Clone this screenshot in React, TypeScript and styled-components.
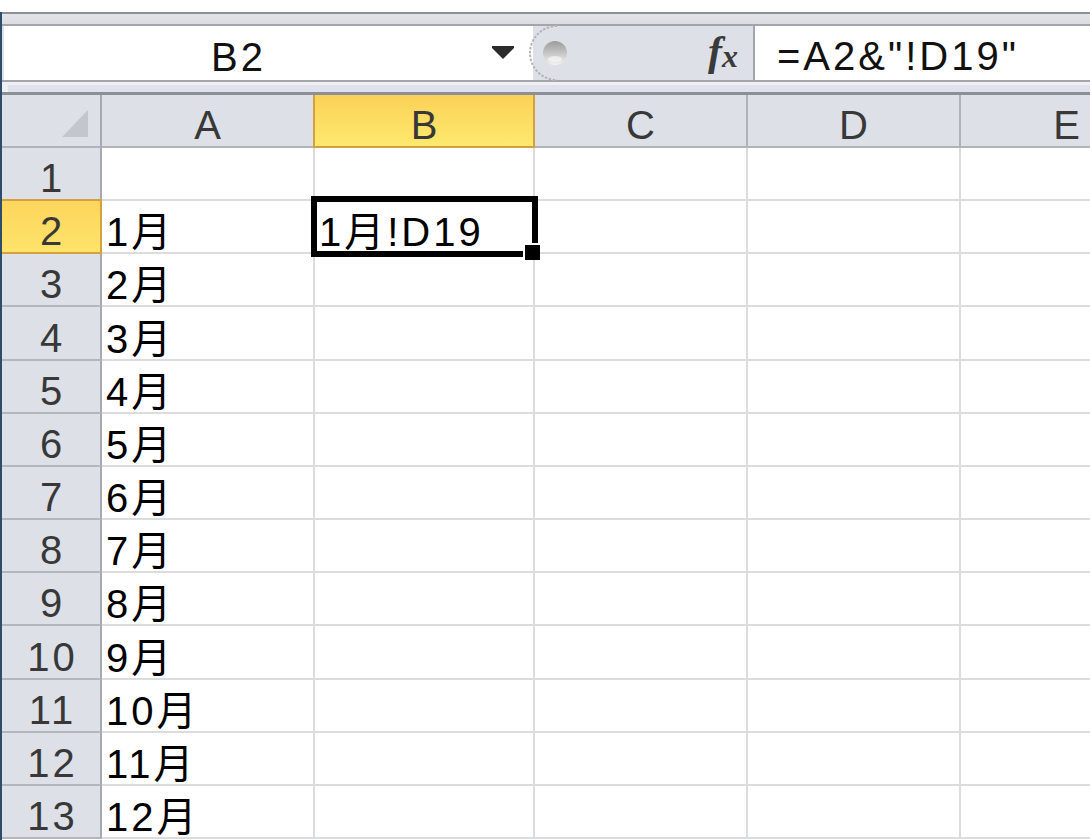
import React from "react";
import styled, { createGlobalStyle } from "styled-components";

const GlobalStyle = createGlobalStyle`
  html, body { margin: 0; padding: 0; background: #ffffff; }
  body {
    width: 1090px;
    height: 840px;
    overflow: hidden;
    font-family: "Liberation Sans", "Noto Sans CJK JP", sans-serif;
  }
`;

const COLS = "100px 213px 220px 213px 213px 213px";
const ORANGE = "#d5a03e";

const Page = styled.div`
  width: 1090px;
  height: 840px;
  padding-top: 12px;
  box-sizing: border-box;
  background: #ffffff;
  overflow: hidden;
`;

const Window = styled.div`
  height: 828px;
  border-left: 2px solid #2e4d6c;
  display: flex;
  flex-direction: column;
  overflow: hidden;
`;

const FormulaBar = styled.div`
  flex: none;
  display: flex;
  flex-direction: column;
  border-top: 2px solid #8c9197;
`;

const TopBand = styled.div`
  height: 10px;
  background: linear-gradient(#e3e5ea, #d9dce2);
  border-bottom: 2px solid #a2a6ac;
`;

const BarRow = styled.div`
  height: 54px;
  display: flex;
  padding-left: 2px;
  background: #dde0e6;
  border-bottom: 2px solid #a2a6ac;
`;

const NameBox = styled.div`
  width: 529px;
  flex: none;
  display: flex;
  background: #ffffff;
`;

const NameText = styled.div`
  flex: 1;
  display: flex;
  align-items: flex-end;
  justify-content: center;
  padding-bottom: 3px;
  font-size: 40px;
  line-height: 40px;
  letter-spacing: 3px;
  color: #111;
`;

const DropButton = styled.div`
  width: 60px;
  display: flex;
  align-items: center;
  justify-content: center;
  padding-bottom: 2px;
`;

const Splitter = styled.svg`
  flex: none;
  overflow: visible;
`;

const FxArea = styled.div`
  flex: none;
  width: 178px;
  display: flex;
  align-items: center;
  justify-content: flex-end;
  padding-right: 15px;
  box-sizing: border-box;
  border-right: 2px solid #a2a6ac;
`;

const FxLabel = styled.span`
  font-family: "Liberation Serif", serif;
  font-style: italic;
  font-weight: bold;
  font-size: 42px;
  line-height: 42px;
  color: #3a3a3a;
  white-space: nowrap;
`;

const FxSub = styled.span`
  font-size: 32px;
  vertical-align: -2px;
`;

const FormulaInput = styled.div`
  flex: 1;
  background: #ffffff;
  display: flex;
  align-items: flex-end;
  padding: 0 0 4px 22px;
  font-size: 40px;
  line-height: 40px;
  letter-spacing: 3px;
  color: #111;
  white-space: nowrap;
  overflow: hidden;
`;

const LowerBand = styled.div`
  height: 13px;
  display: flex;
  padding: 3px 0 0 6px;
  box-sizing: border-box;
  background: #eef0f3;
  border-bottom: 3px solid #8c9096;
`;

const LowerFill = styled.div`
  flex: 1;
  background: #dfe2ed;
`;

const Sheet = styled.div`
  position: relative;
  flex: none;
  width: 1172px;
  display: flex;
  flex-direction: column;
  background: #ffffff;
`;

const Row = styled.div<{ $h: number }>`
  display: grid;
  grid-template-columns: ${COLS};
  height: ${(p) => p.$h}px;
  flex: none;
`;

const HeaderBase = styled.div`
  box-sizing: border-box;
  background: #dde0e6;
  color: #383838;
  font-size: 40px;
  line-height: 40px;
  letter-spacing: 3px;
  display: flex;
  align-items: flex-end;
  justify-content: center;
`;

const Corner = styled(HeaderBase)`
  border-right: 2px solid #a6aab0;
  border-bottom: 2px solid #b0b3b9;
  justify-content: flex-end;
  padding: 0 12px 9px 0;
`;

const ColHeader = styled(HeaderBase)<{ $active?: boolean }>`
  border-right: 2px solid ${(p) => (p.$active ? ORANGE : "#b0b3b9")};
  border-bottom: 2px solid ${(p) => (p.$active ? ORANGE : "#b0b3b9")};
  padding: 0 0 1px 3px;
  background: ${(p) => (p.$active ? "linear-gradient(#fbd158, #fee96e)" : "#dde0e6")};
  box-shadow: ${(p) => (p.$active ? `-2px 0 0 ${ORANGE}` : "none")};
`;

const RowHeader = styled(HeaderBase)<{ $active?: boolean }>`
  border-right: 2px solid ${(p) => (p.$active ? ORANGE : "#a6aab0")};
  border-bottom: 2px solid ${(p) => (p.$active ? ORANGE : "#b3b6bc")};
  padding: 0 0 1px 3px;
  background: ${(p) => (p.$active ? "linear-gradient(#fcd65c, #fee36b)" : "#dde0e6")};
  box-shadow: ${(p) => (p.$active ? `0 -2px 0 ${ORANGE}` : "none")};
`;

const Cell = styled.div`
  box-sizing: border-box;
  border-right: 2px solid #dadcde;
  border-bottom: 2px solid #dadcde;
  display: flex;
  align-items: flex-end;
  padding-left: 4px;
  font-size: 40px;
  line-height: 40px;
  letter-spacing: 3px;
  color: #000;
  white-space: nowrap;
  overflow: hidden;
`;

const Selection = styled.div`
  position: absolute;
  left: 309px;
  top: 101px;
  width: 227px;
  height: 61px;
  box-sizing: border-box;
  border: 6px solid #000;
  pointer-events: none;
`;

const FillHandle = styled.div`
  position: absolute;
  left: 521px;
  top: 148px;
  width: 15px;
  height: 15px;
  background: #000;
  border-left: 2px solid #fff;
  border-top: 2px solid #fff;
`;

const COL_NAMES = ["A", "B", "C", "D", "E"];
const ROW_HEIGHTS = [53, 53, 53, 54, 53, 53, 53, 53, 53, 54, 53, 53, 53];
const COL_A = ["", "1月", "2月", "3月", "4月", "5月", "6月", "7月", "8月", "9月", "10月", "11月", "12月"];

export default function App() {
  return (
    <>
      <GlobalStyle />
      <Page>
        <Window>
          <FormulaBar>
            <TopBand />
            <BarRow>
              <NameBox>
                <NameText>B2</NameText>
                <DropButton>
                  <svg width="22" height="13" viewBox="0 0 22 13">
                    <path d="M0 0 H22 V2 L11 13 L0 2 Z" fill="#2b2b2b" />
                  </svg>
                </DropButton>
              </NameBox>
              <Splitter width="44" height="54" viewBox="0 0 44 54">
                <defs>
                  <linearGradient id="knob" x1="0" y1="0" x2="0" y2="1">
                    <stop offset="0" stopColor="#9c9c9c" />
                    <stop offset="0.55" stopColor="#c9c9c9" />
                    <stop offset="1" stopColor="#f4f4f4" />
                  </linearGradient>
                </defs>
                <path
                  d="M24 0 A27 27 0 0 0 24 54"
                  fill="none"
                  stroke="#b4b4b4"
                  strokeWidth="2"
                  strokeDasharray="2.5 1.5"
                />
                <circle cx="22" cy="27" r="12" fill="url(#knob)" />
                <ellipse cx="22" cy="33" rx="7" ry="3" fill="#ffffff" opacity="0.55" />
              </Splitter>
              <FxArea>
                <FxLabel>
                  f<FxSub>x</FxSub>
                </FxLabel>
              </FxArea>
              <FormulaInput>=A2&amp;"!D19"</FormulaInput>
            </BarRow>
            <LowerBand>
              <LowerFill />
            </LowerBand>
          </FormulaBar>

          <Sheet>
            <Row $h={53}>
              <Corner>
                <svg width="26" height="27" viewBox="0 0 26 27">
                  <path d="M26 0 V27 H0 Z" fill="#c3c6cc" />
                </svg>
              </Corner>
              {COL_NAMES.map((c) => (
                <ColHeader key={c} $active={c === "B"}>
                  {c}
                </ColHeader>
              ))}
            </Row>
            {ROW_HEIGHTS.map((h, i) => (
              <Row key={i} $h={h}>
                <RowHeader $active={i === 1}>{i + 1}</RowHeader>
                <Cell>{COL_A[i]}</Cell>
                <Cell>{i === 1 ? "1月!D19" : ""}</Cell>
                <Cell />
                <Cell />
                <Cell />
              </Row>
            ))}
            <Selection />
            <FillHandle />
          </Sheet>
        </Window>
      </Page>
    </>
  );
}
